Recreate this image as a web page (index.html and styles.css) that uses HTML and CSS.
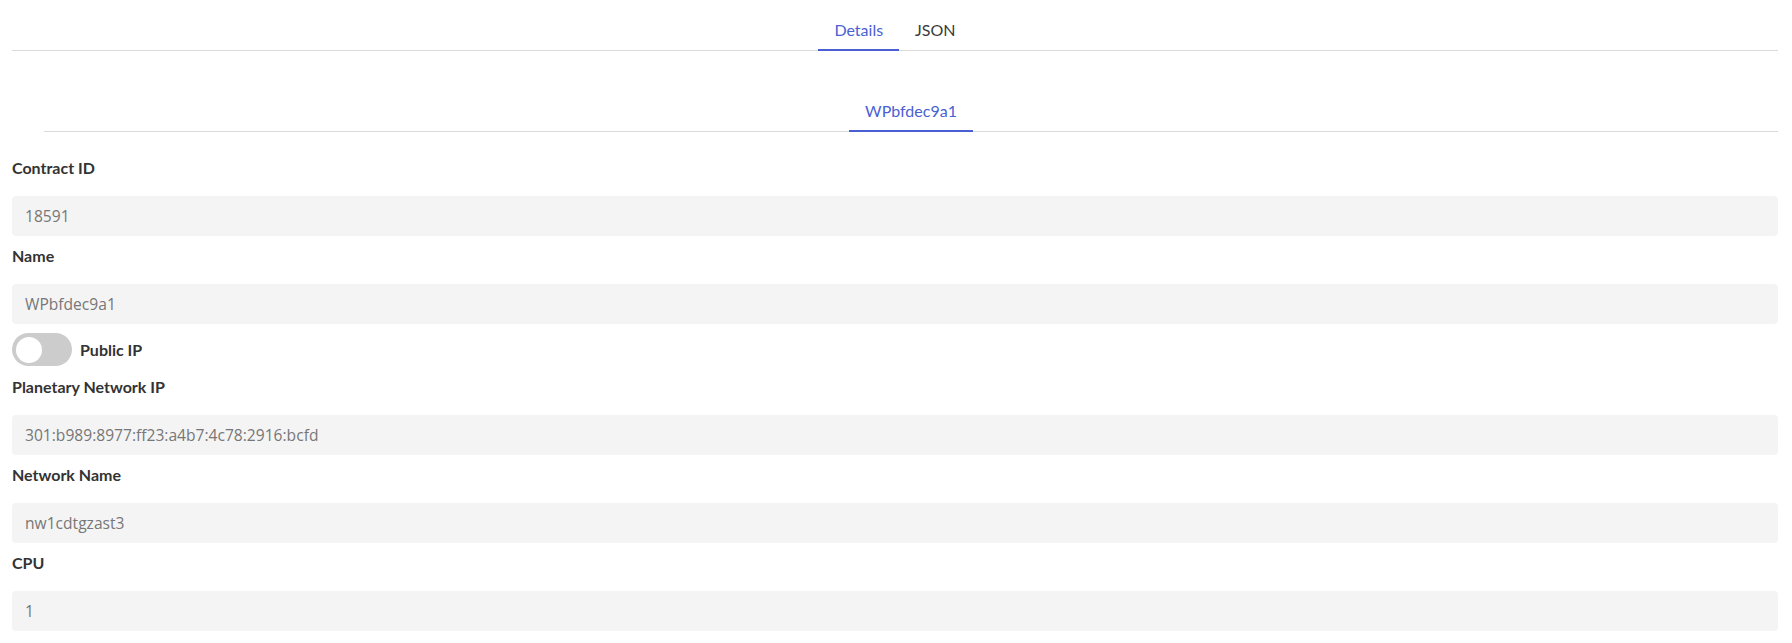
FILE: index.html
```html
<!DOCTYPE html>
<html lang="en">
<head>
<meta charset="utf-8">
<title>Contract details</title>
<link rel="stylesheet" href="styles.css">
</head>
<body>
<div class="page">
  <nav class="tabs">
    <div class="tab active">Details</div>
    <div class="tab">JSON</div>
  </nav>
  <nav class="tabs subtabs">
    <div class="tab active">WPbfdec9a1</div>
  </nav>
  <form class="form">
    <div class="field">
      <label class="label">Contract ID</label>
      <div class="input">18591</div>
    </div>
    <div class="field">
      <label class="label">Name</label>
      <div class="input">WPbfdec9a1</div>
    </div>
    <div class="switch-row">
      <span class="switch"><span class="knob"></span></span>
      <span class="switch-label">Public IP</span>
    </div>
    <div class="field">
      <label class="label">Planetary Network IP</label>
      <div class="input">301:b989:8977:ff23:a4b7:4c78:2916:bcfd</div>
    </div>
    <div class="field">
      <label class="label">Network Name</label>
      <div class="input">nw1cdtgzast3</div>
    </div>
    <div class="field">
      <label class="label">CPU</label>
      <div class="input">1</div>
    </div>
  </form>
</div>
</body>
</html>
```
FILE: styles.css
```css
html, body {
  margin: 0;
  padding: 0;
  background: #ffffff;
}

body {
  font-family: Lato, "Liberation Sans", sans-serif;
  color: #333333;
}

.page {
  padding: 10px 14px 0 12px;
}

.tabs {
  display: flex;
  justify-content: center;
  height: 40px;
  border-bottom: 1px solid #dadada;
}

.subtabs {
  margin: 40px 0 0 32px;
}

.tab {
  position: relative;
  padding: 0 16px;
  line-height: 40px;
  font-size: 16px;
  color: #3a3a3a;
}

.tab.active {
  color: #4a5fd3;
}

.tab.active::after {
  content: "";
  position: absolute;
  left: 0;
  right: 0;
  bottom: -1px;
  height: 2px;
  background: #4a5fd3;
}

.form {
  margin-top: 25px;
}

.field {
  margin-bottom: 9px;
}

.label {
  display: block;
  font-size: 16px;
  font-weight: 700;
  line-height: 22px;
  margin-bottom: 17px;
  color: #333333;
}

.input {
  height: 40px;
  line-height: 40px;
  background: #f4f4f4;
  border-radius: 4px;
  padding-left: 13px;
  font-family: "Open Sans", "Noto Sans", sans-serif;
  font-size: 15.6px;
  color: #777777;
}

.switch-row {
  display: flex;
  align-items: center;
  height: 33px;
  margin: 0 0 10px;
}

.switch {
  display: flex;
  align-items: center;
  box-sizing: border-box;
  width: 60px;
  height: 33px;
  padding: 0 4px;
  border-radius: 17px;
  background: #cccccc;
}

.knob {
  width: 26px;
  height: 26px;
  border-radius: 50%;
  background: #ffffff;
}

.switch-label {
  margin-left: 8px;
  font-size: 16px;
  font-weight: 700;
  color: #333333;
}
```
